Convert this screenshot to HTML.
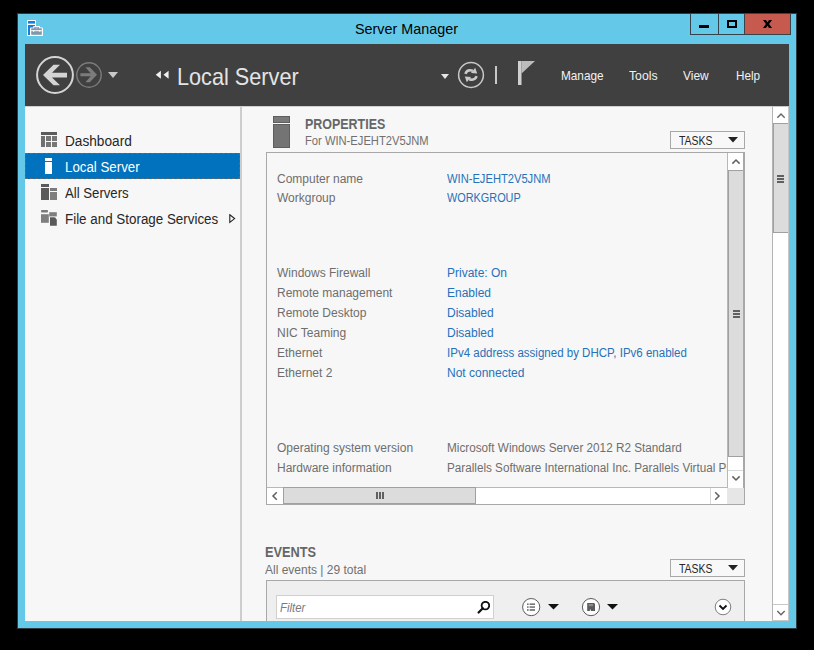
<!DOCTYPE html>
<html><head><meta charset="utf-8">
<style>
*{margin:0;padding:0;box-sizing:border-box}
html,body{width:814px;height:650px;overflow:hidden;background:#000;font-family:"Liberation Sans",sans-serif}
.a{position:absolute}
.t{position:absolute;white-space:nowrap;line-height:1;transform-origin:0 0}
.hm{font-size:13px;color:#F2F2F2;top:69px}
.nv{font-size:14px;color:#262626;left:65px}
.lb{font-size:12px;color:#6E6E6E;left:277px}
.vl{font-size:12px;color:#2672BA;left:447px}
</style></head><body>
<!-- window frame -->
<div class="a" style="left:17px;top:13px;width:780px;height:616px;background:#64C8E8;border:1px solid #303a3e"></div>
<!-- title icon -->
<svg class="a" style="left:26px;top:19px" width="18" height="18" viewBox="0 0 18 18">
 <rect x="1" y="1" width="9" height="16" rx="0.8" fill="#fff"/>
 <rect x="2" y="2" width="7" height="2.6" fill="#1a7fd6"/>
 <rect x="2" y="6" width="7" height="10" fill="#1a7fd6"/>
 <rect x="4" y="8.5" width="13" height="8.5" rx="0.8" fill="#fff"/>
 <rect x="7.3" y="7" width="6.6" height="3" rx="0.6" fill="#fff"/>
 <rect x="8.3" y="7.9" width="4.6" height="2.3" fill="#7E97AB"/>
 <rect x="9.3" y="8.7" width="2.9" height="1" fill="#fff"/>
 <rect x="5.2" y="9.3" width="10.6" height="6.5" fill="#7E97AB"/>
 <rect x="5.2" y="11.2" width="10.6" height="1" fill="#fff"/>
 <rect x="7.2" y="11.2" width="1" height="1.7" fill="#fff"/>
 <rect x="13.3" y="11.2" width="1" height="1.7" fill="#fff"/>
</svg>
<div class="t" id="ttl" style="left:355px;top:21px;font-size:15px;transform:scaleX(0.957);color:#000">Server Manager</div>
<!-- window buttons -->
<div class="a" style="left:690px;top:13px;width:29px;height:22px;border:1px solid #34444a;background:#64C8E8"></div>
<div class="a" style="left:699px;top:25px;width:10px;height:3px;background:#000"></div>
<div class="a" style="left:718px;top:13px;width:27px;height:22px;border:1px solid #34444a;background:#64C8E8"></div>
<div class="a" style="left:727px;top:20px;width:10px;height:8px;border:2px solid #000"></div>
<div class="a" style="left:744px;top:13px;width:47px;height:22px;border:1px solid #34444a;background:#C65A4E"></div>
<svg class="a" style="left:763px;top:20px" width="9" height="8" viewBox="0 0 9 8"><path d="M0 0H3L4.5 2.2L6 0H9L6.1 4L9 8H6L4.5 5.8L3 8H0L2.9 4Z" fill="#000"/></svg>

<!-- dark header -->
<div class="a" style="left:25px;top:44px;width:764px;height:62px;background:#404040"></div>
<svg class="a" style="left:36px;top:56px" width="38" height="38" viewBox="0 0 38 38">
 <circle cx="19" cy="19" r="17.9" fill="none" stroke="#D4D4D4" stroke-width="2"/>
 <path d="M7 19 L17.5 8.7 L24 8.7 L16 16.7 L31 16.7 L31 21.6 L16 21.6 L24 29.3 L17.5 29.3 Z" fill="#D4D4D4"/>
</svg>
<svg class="a" style="left:76px;top:62px" width="26" height="26" viewBox="0 0 26 26">
 <circle cx="13" cy="13" r="12.2" fill="none" stroke="#7C7C7C" stroke-width="1.4"/>
 <path d="M21 12.8 L13.8 5.3 L9.4 5.3 L14.7 11.3 L4.4 11.3 L4.4 14.3 L14.7 14.3 L9.4 20.3 L13.8 20.3 Z" fill="#7C7C7C"/>
</svg>
<svg class="a" style="left:108px;top:72px" width="10" height="6" viewBox="0 0 10 6"><path d="M0 0H10L5 6Z" fill="#C8C8C8"/></svg>
<svg class="a" style="left:155px;top:70px" width="15" height="10" viewBox="0 0 15 10"><path d="M0.7 4.8L5.9 0.8V8.8Z M8.5 4.8L13.6 0.8V8.8Z" fill="#F0F0F0"/></svg>
<div class="t" id="lsv" style="left:177px;top:65px;font-size:24px;transform:scaleX(0.903);color:#E4E4E4">Local Server</div>
<svg class="a" style="left:441px;top:74px" width="8" height="5" viewBox="0 0 8 5"><path d="M0 0H8L4 5Z" fill="#E6E6E6"/></svg>
<svg class="a" style="left:457px;top:61px" width="28" height="28" viewBox="0 0 28 28">
 <circle cx="14" cy="14" r="12.4" fill="none" stroke="#C8C8C8" stroke-width="1.5"/>
 <path d="M8.4 12.8 C9.5 9.5 12.5 8.8 15.8 9.8 M19.6 15.2 C18.5 18.5 15.5 19.2 12.2 18.2" stroke="#CACACA" stroke-width="2.5" fill="none"/>
 <path d="M18.2 6.8 L20.2 12.4 L14 12 Z M9.8 21.2 L7.8 15.6 L14 16 Z" fill="#CACACA"/>
</svg>
<div class="a" style="left:495px;top:66px;width:2px;height:18px;background:#C8C8C8"></div>
<svg class="a" style="left:518px;top:61px" width="20" height="24" viewBox="0 0 20 24">
 <rect x="0" y="0" width="3.5" height="24" fill="#D0D0D0"/>
 <path d="M3.5 0H17L3.5 12.5Z" fill="#BDBDBD"/>
</svg>
<div class="t hm" id="mg" style="left:561px;transform:scaleX(0.906)">Manage</div>
<div class="t hm" id="tl" style="left:629px;transform:scaleX(0.94)">Tools</div>
<div class="t hm" id="vw" style="left:683px;transform:scaleX(0.92)">View</div>
<div class="t hm" id="hp" style="left:736px;transform:scaleX(0.9)">Help</div>

<!-- content -->
<div class="a" style="left:25px;top:106px;width:764px;height:515px;background:#F7F7F7"></div>
<div class="a" style="left:25px;top:106px;width:747px;height:1px;background:#D0D0D0"></div>
<div class="a" style="left:240px;top:107px;width:2px;height:514px;background:#CDCDCD"></div>
<!-- nav -->
<div class="a" style="left:25px;top:153px;width:215px;height:26px;background:#0072BE;border:1px dashed #5F6A70"></div>
<svg class="a" style="left:41px;top:132px" width="16" height="15" viewBox="0 0 16 15">
 <rect x="0" y="0" width="16" height="3" fill="#5C5C5C"/>
 <rect x="0" y="4" width="4" height="11" fill="#707070"/>
 <rect x="5" y="4" width="5" height="5" fill="#777"/><rect x="11" y="4" width="5" height="5" fill="#777"/>
 <rect x="5" y="10" width="5" height="5" fill="#777"/><rect x="11" y="10" width="5" height="5" fill="#777"/>
</svg>
<div class="t nv" id="nd" style="top:134px;transform:scaleX(0.975)">Dashboard</div>
<svg class="a" style="left:45px;top:158px" width="8" height="16" viewBox="0 0 8 16">
 <rect x="0" y="0" width="7" height="3" fill="#fff"/><rect x="0" y="4" width="7" height="12" fill="#fff"/>
</svg>
<div class="t nv" id="nl" style="top:160px;color:#fff;transform:scaleX(0.95)">Local Server</div>
<svg class="a" style="left:41px;top:184px" width="16" height="16" viewBox="0 0 16 16">
 <rect x="0" y="0" width="8" height="3" fill="#5A5A5A"/><rect x="0" y="4" width="8" height="12" fill="#5A5A5A"/>
 <rect x="9" y="4" width="7" height="3" fill="#7A7A7A"/><rect x="9" y="8" width="7" height="8" fill="#7E7E7E"/>
</svg>
<div class="t nv" id="na" style="top:186px;transform:scaleX(0.94)">All Servers</div>
<svg class="a" style="left:41px;top:210px" width="17" height="17" viewBox="0 0 17 17">
 <rect x="0" y="0" width="7" height="2.6" rx="0.8" fill="#7A7A7A"/>
 <rect x="8.2" y="2.2" width="7.6" height="4.8" fill="#7E7E7E"/>
 <rect x="0" y="4.2" width="7.8" height="8.6" fill="#7E7E7E"/>
 <rect x="8.2" y="6.4" width="8.4" height="10" fill="#F7F7F7"/>
 <path d="M9 7.2H13.2L15.8 9.6V15.8H9Z" fill="#5A5A5A"/>
 <rect x="13.3" y="7.6" width="1.3" height="1.3" fill="#5A5A5A"/>
</svg>
<div class="t nv" id="nf" style="top:212px;transform:scaleX(0.956)">File and Storage Services</div>
<svg class="a" style="left:229px;top:214px" width="7" height="10" viewBox="0 0 7 10"><path d="M0.8 0.8L5.6 4.6L0.8 8.4Z" fill="none" stroke="#222" stroke-width="1.1" stroke-linejoin="miter"/></svg>

<!-- properties -->
<svg class="a" style="left:273px;top:116px" width="17" height="32" viewBox="0 0 17 32">
 <rect x="0.5" y="0.5" width="16" height="6" fill="#7A7A7A" stroke="#5E5E5E" stroke-width="1"/>
 <rect x="0.5" y="8.5" width="16" height="23" fill="#747474" stroke="#5E5E5E" stroke-width="1"/>
</svg>
<div class="t" id="pp" style="left:305px;top:117px;font-size:14px;transform:scaleX(0.89);font-weight:bold;color:#666">PROPERTIES</div>
<div class="t" id="pf" style="left:305px;top:134px;font-size:13px;transform:scaleX(0.86);color:#707070">For WIN-EJEHT2V5JNM</div>
<div class="a" style="left:670px;top:131px;width:75px;height:18px;border:1px solid #A8A8A8;background:#F8F8F8"></div>
<div class="t" id="tk" style="left:679px;top:135px;font-size:12px;color:#262626;transform:scaleX(0.87)">TASKS</div>
<svg class="a" style="left:728px;top:137px" width="10" height="6" viewBox="0 0 10 6"><path d="M0 0H10L5 5.5Z" fill="#222"/></svg>

<div class="a" style="left:266px;top:152px;width:479px;height:353px;border:1px solid #A8A8A8;background:#F7F7F7"></div>
<div class="t lb" id="l1" style="top:173px">Computer name</div>
<div class="t vl" id="v1" style="top:173px;transform:scaleX(0.93)">WIN-EJEHT2V5JNM</div>
<div class="t lb" style="top:192px">Workgroup</div>
<div class="t vl" id="v2" style="top:192px;transform:scaleX(0.906)">WORKGROUP</div>
<div class="t lb" id="l3" style="top:267px">Windows Firewall</div>
<div class="t vl" style="top:267px">Private: On</div>
<div class="t lb" id="l4" style="top:287px">Remote management</div>
<div class="t vl" style="top:287px">Enabled</div>
<div class="t lb" style="top:307px">Remote Desktop</div>
<div class="t vl" style="top:307px">Disabled</div>
<div class="t lb" style="top:327px">NIC Teaming</div>
<div class="t vl" style="top:327px">Disabled</div>
<div class="t lb" style="top:347px">Ethernet</div>
<div class="t vl" id="v7" style="top:347px;transform:scaleX(0.96)">IPv4 address assigned by DHCP, IPv6 enabled</div>
<div class="t lb" style="top:367px">Ethernet 2</div>
<div class="t vl" style="top:367px">Not connected</div>
<div class="t lb" style="top:442px">Operating system version</div>
<div class="t" id="v8" style="left:447px;top:442px;transform:scaleX(0.978);font-size:12px;color:#6E6E6E">Microsoft Windows Server 2012 R2 Standard</div>
<div class="t lb" style="top:462px">Hardware information</div>
<div class="a" style="left:447px;top:458px;width:280px;height:20px;overflow:hidden"><div class="t" id="v9" style="left:0;top:4px;font-size:12px;color:#6E6E6E;transform:scaleX(0.975)">Parallels Software International Inc. Parallels Virtual Platform</div></div>

<!-- properties vertical scrollbar -->
<div class="a" style="left:727px;top:153px;width:17px;height:335px;background:#fff;border-left:1px solid #B8B8B8"></div>
<svg class="a" style="left:731px;top:158px" width="10" height="7" viewBox="0 0 10 7"><path d="M1.4 5.6L5 2L8.6 5.6" fill="none" stroke="#606060" stroke-width="1.5"/></svg>
<div class="a" style="left:728px;top:170px;width:16px;height:287px;background:#DCDCDC;border:1px solid #A0A0A0"></div>
<div class="a" style="left:743px;top:153px;width:1px;height:335px;background:#A8A8A8"></div>
<div class="a" style="left:733px;top:310px;width:7px;height:1.5px;background:#606060"></div>
<div class="a" style="left:733px;top:313px;width:7px;height:1.5px;background:#606060"></div>
<div class="a" style="left:733px;top:316px;width:7px;height:1.5px;background:#606060"></div>
<div class="a" style="left:728px;top:470px;width:15px;height:1px;background:#D8D8D8"></div>
<svg class="a" style="left:731px;top:475px" width="10" height="7" viewBox="0 0 10 7"><path d="M1.4 1.4L5 5L8.6 1.4" fill="none" stroke="#606060" stroke-width="1.5"/></svg>
<!-- horizontal scrollbar -->
<div class="a" style="left:267px;top:487px;width:460px;height:17px;background:#fff;border-top:1px solid #B8B8B8"></div>
<svg class="a" style="left:271px;top:491px" width="7" height="10" viewBox="0 0 7 10"><path d="M5.8 1.2L2 5L5.8 8.8" fill="none" stroke="#606060" stroke-width="1.5"/></svg>
<div class="a" style="left:283px;top:487px;width:193px;height:17px;background:#DCDCDC;border:1px solid #A0A0A0"></div>
<div class="a" style="left:376px;top:492px;width:1.5px;height:7px;background:#606060"></div>
<div class="a" style="left:379px;top:492px;width:1.5px;height:7px;background:#606060"></div>
<div class="a" style="left:382px;top:492px;width:1.5px;height:7px;background:#606060"></div>
<div class="a" style="left:710px;top:488px;width:1px;height:16px;background:#D8D8D8"></div>
<svg class="a" style="left:714px;top:491px" width="7" height="10" viewBox="0 0 7 10"><path d="M1.2 1.2L5 5L1.2 8.8" fill="none" stroke="#606060" stroke-width="1.5"/></svg>
<div class="a" style="left:727px;top:488px;width:17px;height:16px;background:#E6E6E6"></div>
<div class="a" style="left:266px;top:504px;width:479px;height:1px;background:#A8A8A8"></div>

<!-- events -->
<div class="t" id="ev" style="left:265px;top:545px;font-size:14px;transform:scaleX(0.91);font-weight:bold;color:#666">EVENTS</div>
<div class="t" id="ea" style="left:265px;top:564px;font-size:12px;color:#707070">All events | 29 total</div>
<div class="a" style="left:670px;top:559px;width:75px;height:18px;border:1px solid #A8A8A8;background:#F8F8F8"></div>
<div class="t" style="left:679px;top:563px;font-size:12px;color:#262626;transform:scaleX(0.87)">TASKS</div>
<svg class="a" style="left:728px;top:565px" width="10" height="6" viewBox="0 0 10 6"><path d="M0 0H10L5 5.5Z" fill="#222"/></svg>
<div class="a" style="left:266px;top:580px;width:479px;height:42px;border:1px solid #A8A8A8;border-bottom:none;background:#EFEFEF"></div>
<div class="a" style="left:276px;top:595px;width:218px;height:24px;border:1px solid #D0D0D0;background:#fff"></div>
<div class="t" id="fl" style="left:280px;top:602px;transform:scaleX(0.95);font-size:12px;font-style:italic;color:#7A7A7A">Filter</div>
<svg class="a" style="left:477px;top:601px" width="13" height="13" viewBox="0 0 13 13">
 <circle cx="8.4" cy="4.6" r="3.8" fill="none" stroke="#111" stroke-width="1.8"/>
 <path d="M5.8 7.3L1.6 11.5" stroke="#111" stroke-width="2.2" stroke-linecap="round"/>
</svg>
<svg class="a" style="left:521px;top:597px" width="20" height="20" viewBox="0 0 20 20">
 <circle cx="10.2" cy="10.1" r="8.6" fill="#fff" stroke="#5A5A5A" stroke-width="1"/>
 <rect x="6" y="6.5" width="1.6" height="1.3" fill="#555"/><rect x="8.6" y="6.5" width="5.4" height="1.3" fill="#555"/>
 <rect x="6" y="9.4" width="1.6" height="1.3" fill="#555"/><rect x="8.6" y="9.4" width="5.4" height="1.3" fill="#555"/>
 <rect x="6" y="12.3" width="1.6" height="1.4" fill="#555"/><rect x="8.6" y="12.3" width="5.4" height="1.4" fill="#555"/>
</svg>
<svg class="a" style="left:548px;top:604px" width="11" height="6" viewBox="0 0 11 6"><path d="M0 0H11L5.5 5.5Z" fill="#111"/></svg>
<svg class="a" style="left:581px;top:597px" width="20" height="20" viewBox="0 0 20 20">
 <circle cx="10" cy="10.1" r="8.6" fill="#fff" stroke="#5A5A5A" stroke-width="1"/>
 <path d="M6.2 6H13L14 7V14H6.2Z" fill="#5A5A5A"/>
 <rect x="7.7" y="7" width="4.5" height="2.2" fill="#8A8A8A"/>
 <rect x="8.8" y="12.6" width="1.2" height="1.2" fill="#fff"/>
</svg>
<svg class="a" style="left:607px;top:604px" width="11" height="6" viewBox="0 0 11 6"><path d="M0 0H11L5.5 5.5Z" fill="#111"/></svg>
<svg class="a" style="left:714px;top:598px" width="18" height="18" viewBox="0 0 18 18">
 <circle cx="9" cy="9" r="7.8" fill="#fff" stroke="#808080" stroke-width="1"/>
 <path d="M5.5 7.5L9 11L12.5 7.5" fill="none" stroke="#111" stroke-width="1.8"/>
</svg>

<!-- main scrollbar -->
<div class="a" style="left:772px;top:107px;width:17px;height:514px;background:#fff;border-left:1px solid #B4B4B4"></div>
<div class="a" style="left:772px;top:106px;width:17px;height:1px;background:#C8C8C8"></div>
<svg class="a" style="left:776px;top:112px" width="10" height="7" viewBox="0 0 10 7"><path d="M1.3 5.8L5 2L8.7 5.8" fill="none" stroke="#666" stroke-width="1.4"/></svg>
<div class="a" style="left:773px;top:123px;width:16px;height:110px;background:#DCDCDC;border:1px solid #A0A0A0"></div>
<div class="a" style="left:777px;top:175px;width:7px;height:1.5px;background:#606060"></div>
<div class="a" style="left:777px;top:178px;width:7px;height:1.5px;background:#606060"></div>
<div class="a" style="left:777px;top:181px;width:7px;height:1.5px;background:#606060"></div>
<div class="a" style="left:773px;top:604px;width:16px;height:1px;background:#C8C8C8"></div>
<svg class="a" style="left:776px;top:610px" width="10" height="7" viewBox="0 0 10 7"><path d="M1.3 1L5 4.8L8.7 1" fill="none" stroke="#666" stroke-width="1.4"/></svg>
<div class="a" style="left:788px;top:107px;width:1px;height:514px;background:#C8C8C8"></div>
<div class="a" style="left:772px;top:620px;width:17px;height:1px;background:#C8C8C8"></div>

<!-- bottom frame cover -->
<div class="a" style="left:18px;top:621px;width:778px;height:7px;background:#64C8E8"></div>
</body></html>
